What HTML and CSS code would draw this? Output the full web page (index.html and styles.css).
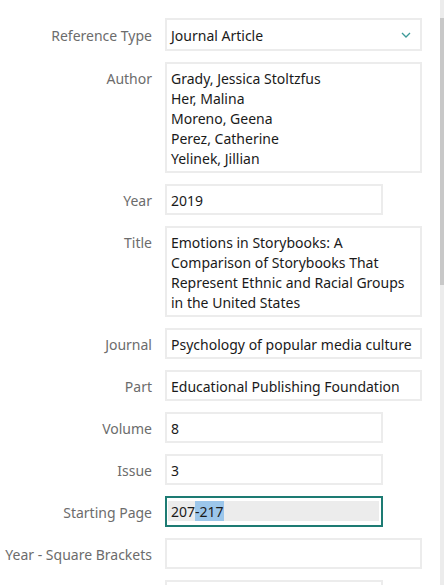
FILE: index.html
```html
<!DOCTYPE html>
<html lang="en">
<head>
<meta charset="utf-8">
<title>Reference</title>
<link rel="stylesheet" href="styles.css">
</head>
<body>
<div class="page">
  <form class="form">
    <div class="row row-select">
      <div class="label">Reference Type</div>
      <div class="field field-full select">
        <span class="value">Journal Article</span>
        <svg class="chevron" width="10" height="6" viewBox="0 0 10 6"><polyline points="1,1 5,5 9,1" fill="none" stroke="#3c9a98" stroke-width="1.3"/></svg>
      </div>
    </div>
    <div class="row row-area">
      <div class="label">Author</div>
      <div class="field field-full area">Grady, Jessica Stoltzfus<br>Her, Malina<br>Moreno, Geena<br>Perez, Catherine<br>Yelinek, Jillian</div>
    </div>
    <div class="row">
      <div class="label">Year</div>
      <div class="field field-short">2019</div>
    </div>
    <div class="row row-area">
      <div class="label">Title</div>
      <div class="field field-full area">Emotions in Storybooks: A<br>Comparison of Storybooks That<br>Represent Ethnic and Racial Groups<br>in the United States</div>
    </div>
    <div class="row">
      <div class="label">Journal</div>
      <div class="field field-full">Psychology of popular media culture</div>
    </div>
    <div class="row">
      <div class="label">Part</div>
      <div class="field field-full">Educational Publishing Foundation</div>
    </div>
    <div class="row">
      <div class="label">Volume</div>
      <div class="field field-short">8</div>
    </div>
    <div class="row">
      <div class="label">Issue</div>
      <div class="field field-short">3</div>
    </div>
    <div class="row">
      <div class="label">Starting Page</div>
      <div class="field field-short focused"><div class="inner">207<span class="sel">-217</span></div></div>
    </div>
    <div class="row">
      <div class="label">Year - Square Brackets</div>
      <div class="field field-full"></div>
    </div>
    <div class="row">
      <div class="label"></div>
      <div class="field field-short"></div>
    </div>
  </form>
  <div class="scrollbar"><div class="thumb"></div></div>
</div>
</body>
</html>
```
FILE: styles.css
```css
html, body {
  margin: 0;
  padding: 0;
  background: #ffffff;
  height: 100%;
  overflow: hidden;
}
body {
  font-family: "Noto Sans", "Open Sans", sans-serif;
  font-size: 14px;
  line-height: 20px;
  color: #1a1a1a;
}
.page {
  display: flex;
  height: 585px;
}
.form {
  flex: 1;
  padding-top: 18px;
  display: flex;
  flex-direction: column;
  gap: 11px;
}
.row {
  display: grid;
  grid-template-columns: 152px auto;
  column-gap: 13px;
  align-items: start;
}
.label {
  text-align: right;
  color: #6c6c6c;
  padding-top: 7px;
  white-space: nowrap;
}
.row-select .label {
  padding-top: 8px;
}
.row-area .label {
  padding-top: 7px;
}
.field {
  box-sizing: border-box;
  border: 2px solid #ececec;
  height: 31px;
  padding: 5px 4px 0;
  white-space: nowrap;
  overflow: hidden;
}
.field-full { width: 257px; }
.field-short { width: 218px; }
.select {
  height: 33px;
  padding-top: 6px;
  display: flex;
  align-items: flex-start;
  justify-content: space-between;
  padding-right: 9px;
}
.chevron {
  margin-top: 6px;
}
.area {
  height: auto;
  padding: 5px 4px 2px;
}
.focused {
  border-color: #1d7b73;
  padding: 3px 2px 0 1px;
}
.inner {
  background: #ececec;
  height: 20px;
  padding-left: 3px;
  padding-top: 1px;
  box-sizing: border-box;
  line-height: 20px;
}
.sel {
  background: #9cc6ea;
  display: inline-block;
  height: 20px;
  margin-top: -1px;
  vertical-align: top;
  line-height: 21px;
}
.scrollbar {
  width: 4px;
  background: #ececec;
}
.thumb {
  margin-top: 18px;
  height: 267px;
  background: #c8c8c8;
}
```
